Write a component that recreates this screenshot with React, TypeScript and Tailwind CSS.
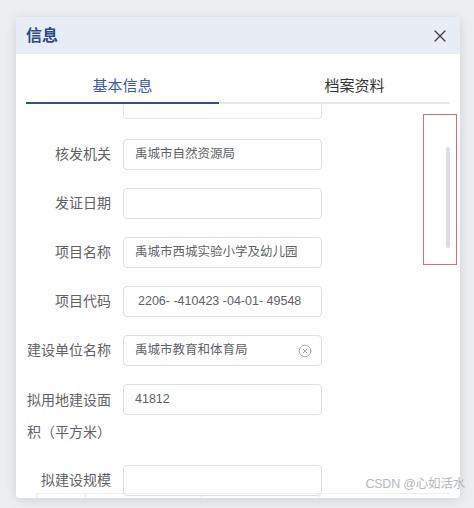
import { X, CircleX } from 'lucide-react'

const fields = [
  { label: '核发机关', value: '禹城市自然资源局' },
  { label: '发证日期', value: '' },
  { label: '项目名称', value: '禹城市西城实验小学及幼儿园' },
  { label: '项目代码', value: '2206- -410423 -04-01- 49548' },
  { label: '建设单位名称', value: '禹城市教育和体育局', clearable: true },
]

const App = () => {
  return (
    <div
      className="relative w-[474px] h-[508px] overflow-hidden bg-[#eceef1] pt-[17px] pl-[16px]"
      style={{ fontFamily: '"Liberation Sans", "Noto Sans CJK SC", sans-serif' }}
    >
      {/* Dialog */}
      <div className="w-[444px] h-[481px] bg-white rounded-[4px] shadow-[0_2px_12px_rgba(0,0,0,0.12)] overflow-hidden flex flex-col">
        {/* Header */}
        <div className="h-[37px] shrink-0 bg-[#e8edf5] flex items-center justify-between pl-[10px] pr-[10px]">
          <span className="text-[16px] font-bold text-[#2f4a88]">信息</span>
          <X size={20} strokeWidth={1.5} className="text-[#3d3d3d]" />
        </div>

        {/* Tabs */}
        <div className="mx-[10px] shrink-0 flex h-[50px]">
          <div className="flex-1 flex items-end justify-center pb-[5px] border-b-[2px] border-[#2f4f9a] text-[15px] text-[#3a5ba6]">
            基本信息
          </div>
          <div className="w-[231px] flex items-end justify-center pl-[40px] pb-[5px] border-b-[2px] border-[#e4e7ed] text-[15px] text-[#333]">
            档案资料
          </div>
        </div>

        {/* Form body */}
        <div className="relative flex-1 overflow-hidden px-[10px]">
          <div className="ml-[97px] w-[199px] h-[15px] border border-t-0 border-[#e4e7ed] rounded-b-[4px]" />

          <div className="mt-[20px] flex flex-col gap-[18px]">
            {fields.map((f) => (
              <div key={f.label} className="flex items-center">
                <div className="w-[97px] pr-[12px] text-right text-[14px] text-[#5f6166] leading-[31px]">
                  {f.label}
                </div>
                <div className="w-[199px] h-[31px] border border-[#dcdfe6] rounded-[4px] flex items-center justify-between pl-[11px] pr-[9px] text-[12.5px] text-[#606266]">
                  <span className={f.value.startsWith('2') ? 'pl-[3px]' : ''}>{f.value}</span>
                  {f.clearable && <CircleX size={14} strokeWidth={1.4} className="text-[#909399]" />}
                </div>
              </div>
            ))}

            <div className="flex items-start">
              <div className="w-[97px] pr-[12px] text-right text-[14px] text-[#5f6166] leading-[32px]">
                拟用地建设面积（平方米）
              </div>
              <div className="w-[199px] h-[31px] border border-[#dcdfe6] rounded-[4px] flex items-center pl-[11px] text-[12.5px] text-[#606266]">
                41812
              </div>
            </div>
          </div>

          <div className="mt-[17px] flex items-center">
            <div className="w-[97px] pr-[12px] text-right text-[14px] text-[#5f6166] leading-[31px]">
              拟建设规模
            </div>
            <div className="w-[199px] h-[31px] border border-[#dcdfe6] rounded-[4px]" />
          </div>

          {/* table beginning */}
          <div className="ml-[10px] mt-[-3px] flex h-[20px] border-t border-[#eef0f4]">
            <div className="w-[49px] border-l border-[#e6e8ec]" />
            <div className="w-[116px] border-l border-[#e6e8ec]" />
            <div className="w-[117px] border-l border-[#e6e8ec]" />
            <div className="flex-1 border-l border-[#e6e8ec]" />
          </div>

          {/* scrollbar + red annotation */}
          <div className="absolute left-[407px] top-[10px] w-[34px] h-[151px] border border-[#e06a78]" />
          <div className="absolute left-[430px] top-[43px] w-[4px] h-[101px] rounded-full bg-[#dcdfe6]" />
        </div>
      </div>

      {/* watermark */}
      <div className="absolute right-[9px] bottom-[14px] text-[12.5px] text-[#b5b8bd] tracking-[-0.2px]">
        CSDN @心如活水
      </div>
    </div>
  )
}

export default App
